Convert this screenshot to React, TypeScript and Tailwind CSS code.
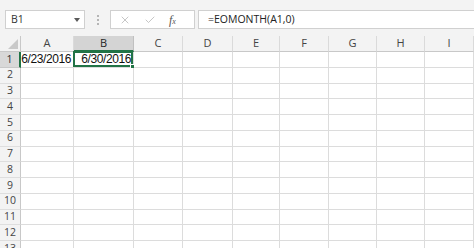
import { X, Check } from "lucide-react";

const cols = ["A", "B", "C", "D", "E", "F", "G", "H", "I"];
const rows = Array.from({ length: 13 }, (_, i) => i + 1);

const grid =
  "grid grid-cols-[21px_53px_60px_49px_50px_47px_49px_48px_48px_1fr]";

function FormulaBar() {
  return (
    <div className="h-[36px] bg-[#f3f3f3] flex items-start pt-[10px] pl-[5px]">
      {/* name box */}
      <div className="w-[80px] h-[19px] bg-white border border-[#d0d0d0] flex items-center justify-between pl-[5px] pr-[4px]">
        <span className="text-[10.5px] text-[#333] leading-none">B1</span>
        <svg width="6" height="4" viewBox="0 0 6 4">
          <path d="M0 0 L6 0 L3 4 Z" fill="#5a5a5a" />
        </svg>
      </div>

      {/* grip dots */}
      <div className="w-[25px] h-[19px] flex flex-col items-center justify-center gap-[2px]">
        <div className="w-[2px] h-[2px] bg-[#b5b5b5]" />
        <div className="w-[2px] h-[2px] bg-[#b5b5b5]" />
        <div className="w-[2px] h-[2px] bg-[#b5b5b5]" />
      </div>

      {/* cancel / enter / fx */}
      <div className="w-[85px] h-[19px] bg-white border border-[#d0d0d0] flex items-center pl-[8px] gap-[13px]">
        <X className="w-[12px] h-[12px] text-[#b3b3b3]" strokeWidth={1.5} />
        <Check className="w-[12px] h-[12px] text-[#b3b3b3]" strokeWidth={1.5} />
        <span className="font-['Liberation_Serif',serif] italic text-[#555] text-[12px] leading-none">
          f<span className="text-[8px]">x</span>
        </span>
      </div>

      {/* formula box */}
      <div className="ml-[3px] flex-1 h-[19px] bg-white border border-[#d0d0d0] border-r-0 flex items-center pl-[9px]">
        <span className="text-[10.5px] text-[#222] leading-none">=EOMONTH(A1,0)</span>
      </div>
    </div>
  );
}

function HeaderRow() {
  return (
    <div className={grid}>
      <div className="h-[16px] bg-[#f3f3f3] border-r border-b border-[#c8c8c8] flex items-end justify-end p-[2px]">
        <svg width="10" height="10" viewBox="0 0 10 10">
          <path d="M10 0 L10 10 L0 10 Z" fill="#c9c9c9" />
        </svg>
      </div>
      {cols.map((c) => (
        <div
          key={c}
          className={
            c === "B"
              ? "h-[16px] bg-[#d4d4d4] border-r border-[#c0c0c0] border-b-2 border-b-[#217346] flex items-center justify-center text-[11px] text-[#262626]"
              : "h-[16px] bg-[#f3f3f3] border-r border-[#dadada] border-b border-b-[#c8c8c8] flex items-center justify-center text-[11px] text-[#444]"
          }
        >
          {c}
        </div>
      ))}
    </div>
  );
}

function Row({ n }: { n: number }) {
  const selected = n === 1;
  return (
    <div className={grid}>
      <div
        className={
          selected
            ? "h-[15.75px] bg-[#d8d8d8] border-b border-[#c8c8c8] border-r-2 border-r-[#217346] flex items-center justify-center text-[10.5px] text-[#333]"
            : "h-[15.75px] bg-[#f3f3f3] border-b border-[#dedede] border-r border-r-[#c8c8c8] flex items-center justify-center text-[10.5px] text-[#444]"
        }
      >
        {n}
      </div>
      {cols.map((c) => (
        <div
          key={c}
          className="relative h-[15.75px] border-r border-b border-[#dcdcdc] flex items-center justify-end pr-[2px] font-['Liberation_Sans',sans-serif] text-[12px] tracking-[-0.4px] text-[#111]"
        >
          {n === 1 && c === "A" && "6/23/2016"}
          {n === 1 && c === "B" && (
            <>
              <span className="relative">6/30/2016</span>
              <div className="absolute -left-[1px] -top-[1px] right-0 bottom-0 border-2 border-[#217346]" />
              <div className="absolute -right-[2px] -bottom-[2px] w-[5px] h-[5px] bg-[#217346] border border-white" />
            </>
          )}
        </div>
      ))}
    </div>
  );
}

export default function App() {
  return (
    <div className="w-[474px] h-[248px] overflow-hidden bg-white font-['Open_Sans',sans-serif]">
      <FormulaBar />
      <HeaderRow />
      {rows.map((n) => (
        <Row key={n} n={n} />
      ))}
    </div>
  );
}
